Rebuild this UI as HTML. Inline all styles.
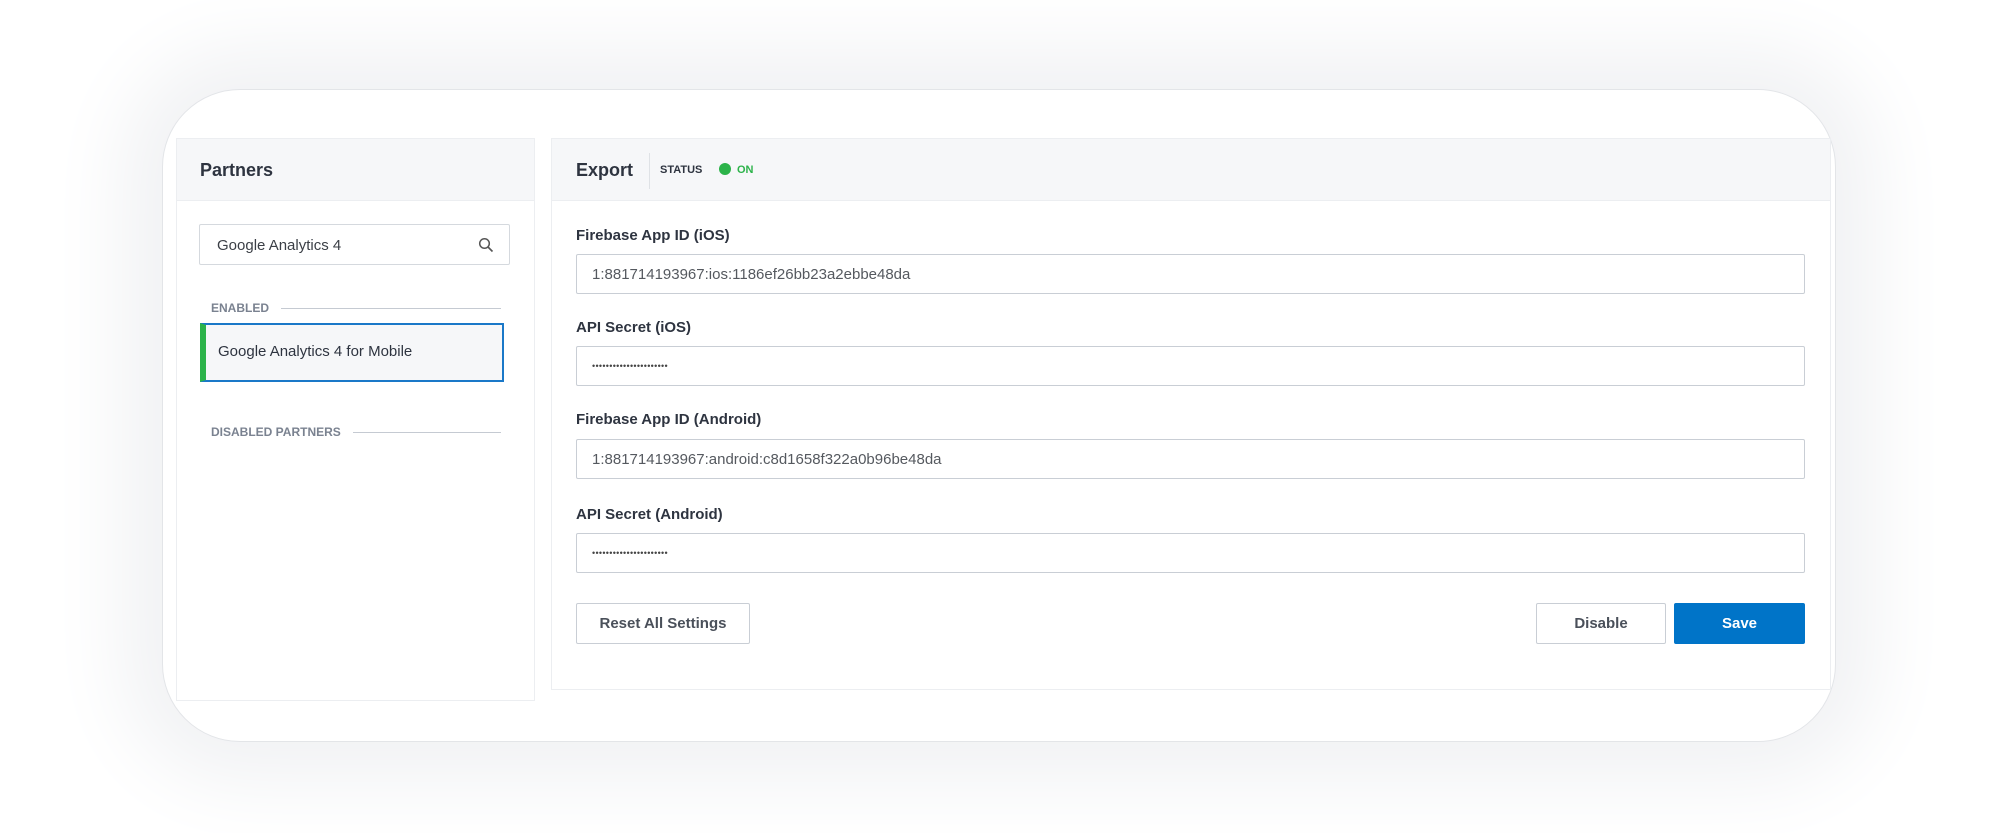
<!DOCTYPE html>
<html><head><style>
*{box-sizing:border-box;margin:0;padding:0}
body{width:1999px;height:833px;background:#fff;font-family:"Liberation Sans",sans-serif;position:relative;overflow:hidden}
.card{position:absolute;left:162px;top:89px;width:1674px;height:653px;background:#fff;border-radius:78px;border:1px solid #e3e5e8;box-shadow:0 0 80px 40px #f1f2f4}
.p{position:absolute;background:#fff;border:1px solid #eceef1}
.hd{position:absolute;left:0;right:0;top:0;height:62px;background:#f6f7f9;border-bottom:1px solid #eceef1}
.t{position:absolute;font-weight:bold;color:#2e3440}
.in{position:absolute;left:576px;width:1229px;height:40px;border:1px solid #c9ced5;border-radius:2px;font-size:15px;color:#55595f;padding:11px 0 0 15px}
.pw{font-size:9px;letter-spacing:0.3px;padding-top:14px;color:#444}
.lb{position:absolute;left:576px;font-size:15px;font-weight:bold;color:#2e3440}
.sec{position:absolute;left:211px;font-size:12px;font-weight:bold;color:#7a8290}
.ln{position:absolute;height:1px;background:#c5cad2}
.btn{position:absolute;top:603px;height:41px;border:1px solid #c9ced5;border-radius:2px;font-size:15px;font-weight:bold;color:#4a505a;text-align:center;line-height:39px}
</style></head><body>
<div class="card"></div>
<div class="p" style="left:176px;top:138px;width:359px;height:563px"><div class="hd"></div></div>
<div class="t" style="left:200px;top:160px;font-size:18px">Partners</div>
<div style="position:absolute;left:199px;top:224px;width:311px;height:41px;border:1px solid #d5d9de;border-radius:2px;font-size:15px;color:#3b3f46;padding:12px 0 0 17px">Google Analytics 4</div>
<svg style="position:absolute;left:478px;top:237px" width="16" height="16" viewBox="0 0 16 16"><circle cx="6.5" cy="6.5" r="4.8" fill="none" stroke="#555" stroke-width="1.5"/><path d="M10 10l4.5 4.5" stroke="#555" stroke-width="1.6"/></svg>
<div class="sec" style="top:301px">ENABLED</div><div class="ln" style="left:281px;top:308px;width:220px"></div>
<div style="position:absolute;left:200px;top:323px;width:304px;height:59px;background:#f6f7f9;border:2px solid #1a78c8;border-left:6px solid #2cb34a;font-size:15px;color:#2e3440;padding:18px 0 0 12px">Google Analytics 4 for Mobile</div>
<div class="sec" style="top:425px">DISABLED PARTNERS</div><div class="ln" style="left:353px;top:432px;width:148px"></div>
<div class="p" style="left:551px;top:138px;width:1280px;height:552px"><div class="hd"></div></div>
<div class="t" style="left:576px;top:160px;font-size:18px">Export</div>
<div style="position:absolute;left:649px;top:153px;width:1px;height:36px;background:#dfe2e6"></div>
<div class="t" style="left:660px;top:164px;font-size:11px">STATUS</div>
<div style="position:absolute;left:719px;top:163px;width:12px;height:12px;border-radius:50%;background:#2cb34a"></div>
<div style="position:absolute;left:737px;top:164px;font-size:11px;font-weight:bold;color:#2cb34a">ON</div>
<div class="lb" style="top:227px">Firebase App ID (iOS)</div>
<div class="in" style="top:254px">1:881714193967:ios:1186ef26bb23a2ebbe48da</div>
<div class="lb" style="top:319px">API Secret (iOS)</div>
<div class="in pw" style="top:346px">••••••••••••••••••••••</div>
<div class="lb" style="top:411px">Firebase App ID (Android)</div>
<div class="in" style="top:439px">1:881714193967:android:c8d1658f322a0b96be48da</div>
<div class="lb" style="top:506px">API Secret (Android)</div>
<div class="in pw" style="top:533px">••••••••••••••••••••••</div>
<div class="btn" style="left:576px;width:174px">Reset All Settings</div>
<div class="btn" style="left:1536px;width:130px">Disable</div>
<div class="btn" style="left:1674px;width:131px;background:#0074c8;border-color:#0074c8;color:#fff">Save</div>
</body></html>
